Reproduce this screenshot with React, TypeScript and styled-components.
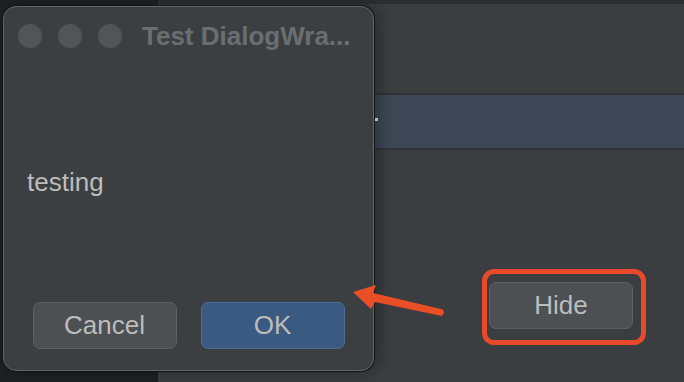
import React from 'react';
import styled, { createGlobalStyle } from 'styled-components';

const GlobalStyle = createGlobalStyle`
  html, body {
    margin: 0;
    padding: 0;
    width: 684px;
    height: 382px;
    overflow: hidden;
    background: #1e1f22;
  }
  * { box-sizing: border-box; }
`;

const Page = styled.div`
  position: relative;
  width: 684px;
  height: 382px;
  display: flex;
  font-family: "Liberation Sans", Arial, sans-serif;
`;

const SideStrip = styled.div`
  width: 158px;
  background: #1f2023;
`;

const MainPanel = styled.div`
  flex: 1;
  display: flex;
  flex-direction: column;
  background: #3b3e41;
  border-top: 4px solid #2c2e31;
  padding-top: 89px;
`;

const SelectedRow = styled.div`
  height: 57px;
  background: #3d4755;
  border-top: 2px solid #313336;
  border-bottom: 2px solid #313336;
`;

const ActionRow = styled.div`
  display: flex;
  justify-content: flex-end;
  padding: 119px 38px 0 0;
`;

const Highlight = styled.div`
  border: 5px solid #ea4a2c;
  border-radius: 12px;
  padding: 8px 8px 11px 2px;
`;

const Button = styled.button<{ $primary?: boolean }>`
  width: 144px;
  height: 47px;
  border-radius: 7px;
  border: 1.5px solid ${(p) => (p.$primary ? '#4b6d97' : '#5d6063')};
  background: ${(p) => (p.$primary ? '#3b5a81' : '#4c5053')};
  color: #bcbcbc;
  font-family: "Liberation Sans", Arial, sans-serif;
  font-size: 26px;
  padding: 0;
  display: flex;
  align-items: center;
  justify-content: center;
`;

const Dialog = styled.div`
  position: absolute;
  left: 3px;
  top: 6px;
  width: 371px;
  height: 365px;
  background: #3c3f41;
  border-radius: 13px;
  border: 1.5px solid #62656a;
  box-shadow: 0 0 0 1px #141517, 4px 0 18px rgba(0, 0, 0, 0.35);
  display: flex;
  flex-direction: column;
`;

const TitleBar = styled.div`
  height: 56px;
  display: flex;
  align-items: center;
  padding: 2px 0 0 14px;
  gap: 16px;
`;

const Light = styled.span`
  width: 24px;
  height: 24px;
  border-radius: 50%;
  background: #525558;
  flex-shrink: 0;
`;

const Title = styled.span`
  margin-left: 4px;
  font-size: 26px;
  font-weight: bold;
  color: #6b6e71;
  white-space: nowrap;
`;

const Body = styled.div`
  flex: 1;
  padding: 104px 0 0 23px;
  font-size: 26px;
  line-height: 30px;
  color: #bcbcbc;
`;

const Footer = styled.div`
  display: flex;
  justify-content: center;
  gap: 24px;
  padding-bottom: 21px;
`;

const Overlay = styled.svg`
  position: absolute;
  left: 0;
  top: 0;
  pointer-events: none;
`;

export default function App() {
  return (
    <>
      <GlobalStyle />
      <Page>
        <SideStrip />
        <MainPanel>
          <SelectedRow />
          <ActionRow>
            <Highlight>
              <Button>Hide</Button>
            </Highlight>
          </ActionRow>
        </MainPanel>
        <Dialog>
          <TitleBar>
            <Light />
            <Light />
            <Light />
            <Title>Test DialogWra...</Title>
          </TitleBar>
          <Body>testing</Body>
          <Footer>
            <Button>Cancel</Button>
            <Button $primary>OK</Button>
          </Footer>
        </Dialog>
        <Overlay width="684" height="382" viewBox="0 0 684 382">
          <rect x="375" y="118" width="3" height="3" fill="#b8b8b8" />
          <polygon
            points="353,292 376,285 373,293 443,309.5 444,313 442,316 375,302 371,309"
            fill="#ea4e26"
            strokeLinejoin="round"
          />
        </Overlay>
      </Page>
    </>
  );
}
